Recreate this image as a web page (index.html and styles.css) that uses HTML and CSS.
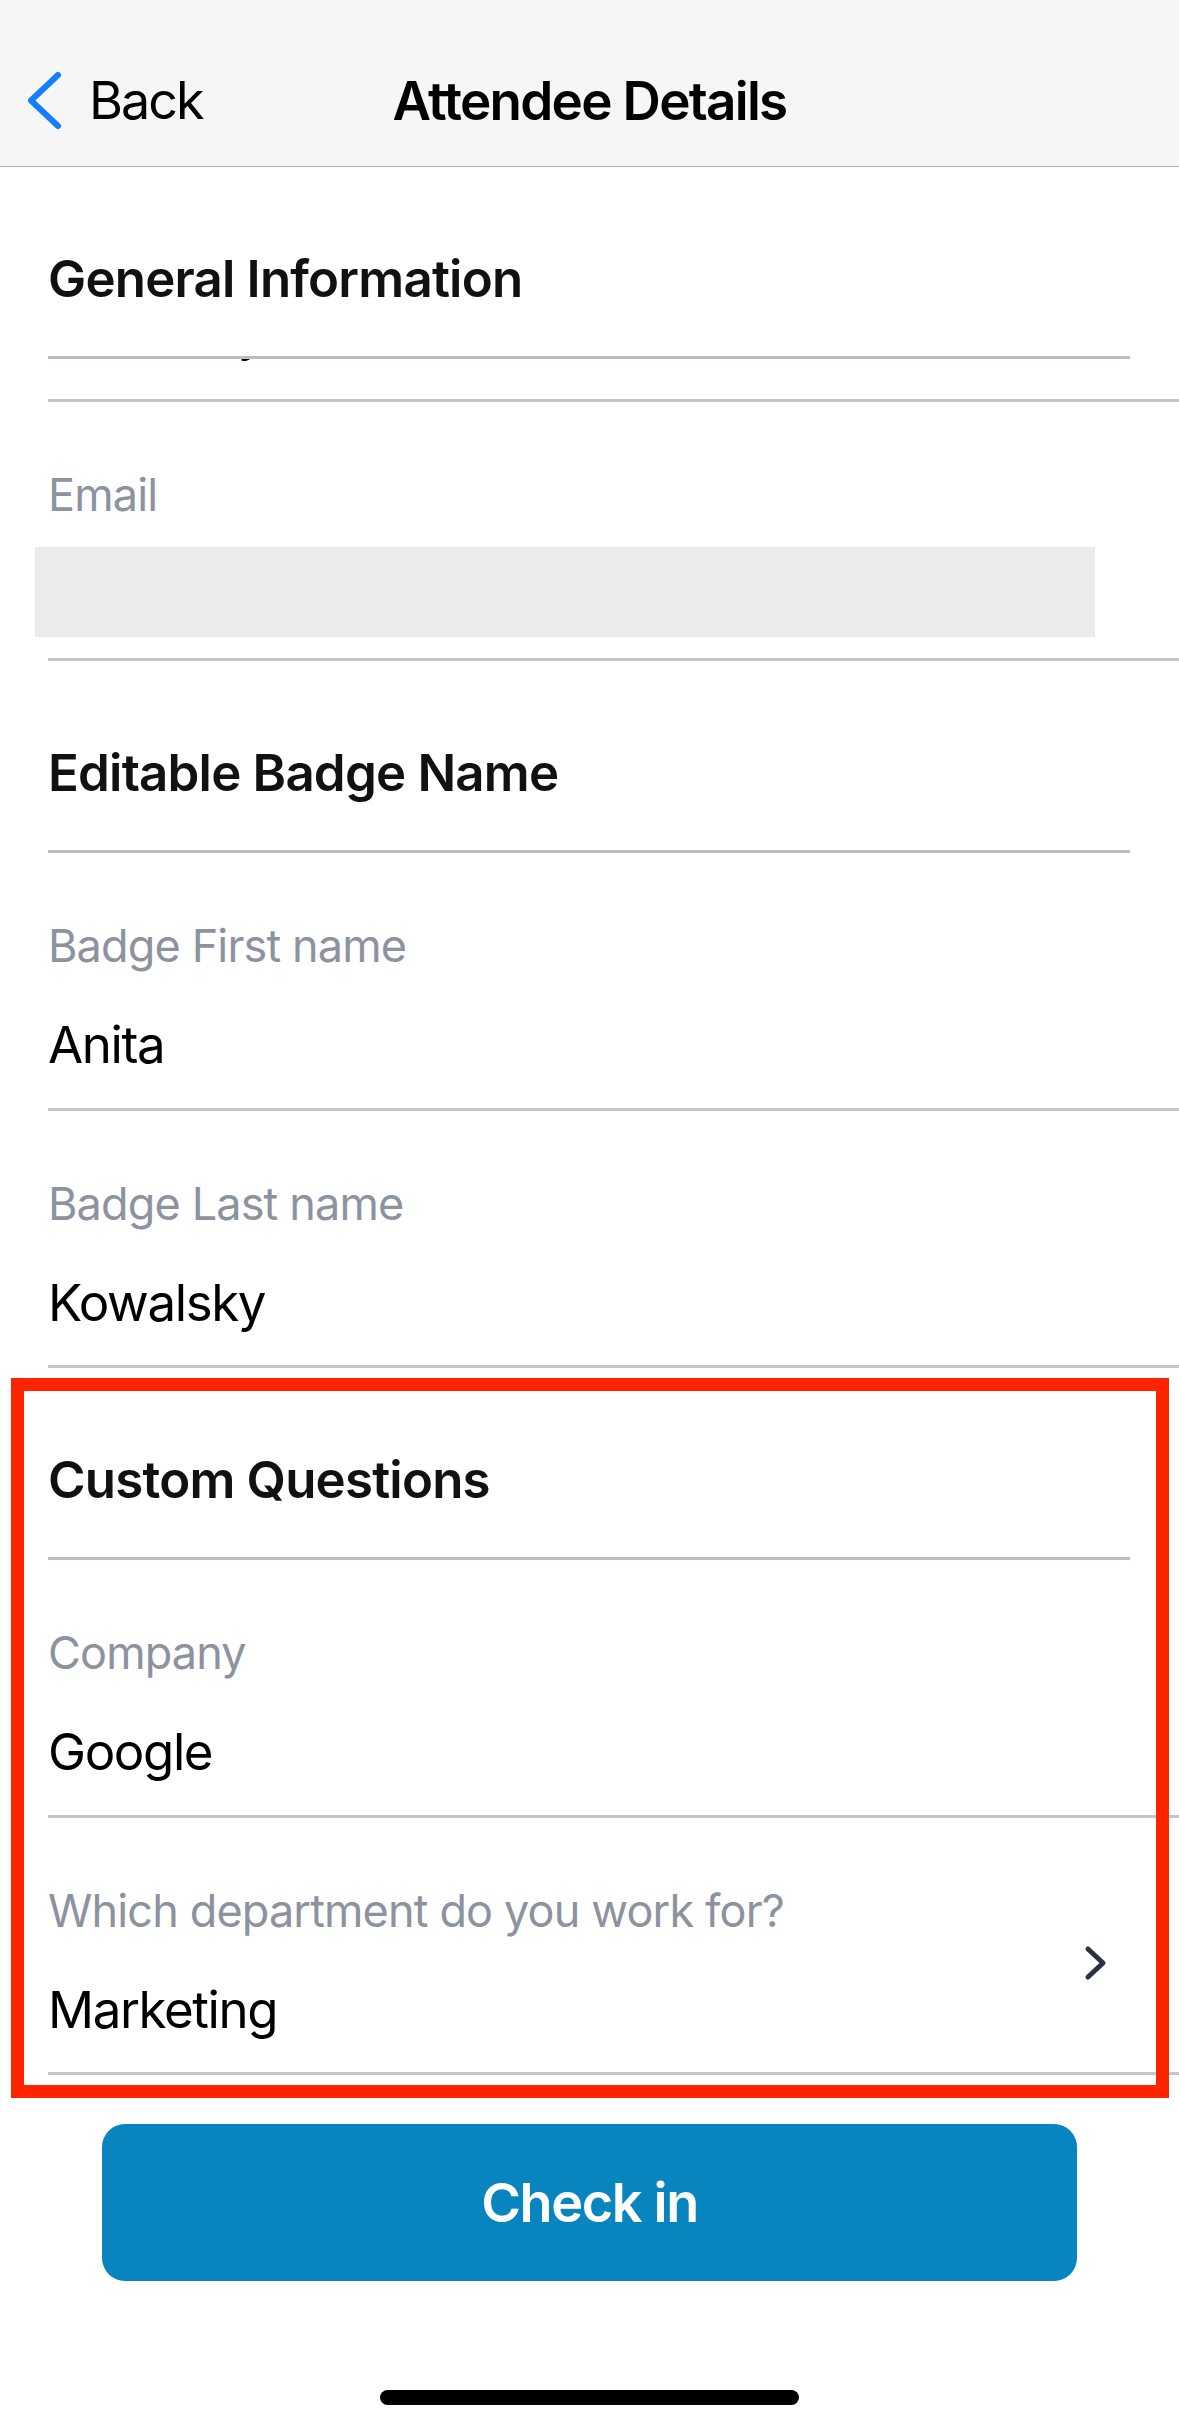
FILE: index.html
```html
<!DOCTYPE html>
<html lang="en">
<head>
<meta charset="utf-8">
<title>Attendee Details</title>
<link rel="stylesheet" href="styles.css">
</head>
<body>
<div class="screen">
  <header class="navbar">
    <a class="nav-back" href="#">
      <svg class="nav-back-icon" width="40" height="64" viewBox="0 0 40 64" aria-hidden="true">
        <path d="M33 6 L6 31.5 L33 57" fill="none" stroke="#157efb" stroke-width="6" stroke-linecap="round" stroke-linejoin="round"/>
      </svg>
      <span>Back</span>
    </a>
    <h1 class="nav-title">Attendee Details</h1>
    <span class="nav-spacer"></span>
  </header>

  <main class="form">
    <section class="group">
      <div class="group-head"><h2>General Information</h2></div>
      <div class="field field--peek"><span class="field-value">Kowalsky</span></div>
      <div class="field field--email">
        <span class="field-label">Email</span>
        <div class="field-blank"></div>
      </div>
    </section>

    <section class="group">
      <div class="group-head"><h2>Editable Badge Name</h2></div>
      <div class="field">
        <span class="field-label">Badge First name</span>
        <span class="field-value">Anita</span>
      </div>
      <div class="field">
        <span class="field-label">Badge Last name</span>
        <span class="field-value">Kowalsky</span>
      </div>
    </section>

    <section class="group group--highlight">
      <div class="group-head"><h2>Custom Questions</h2></div>
      <div class="field">
        <span class="field-label">Company</span>
        <span class="field-value">Google</span>
      </div>
      <div class="field field--select">
        <div class="field-text">
          <span class="field-label">Which department do you work for?</span>
          <span class="field-value">Marketing</span>
        </div>
        <svg class="field-chevron" width="30" height="40" viewBox="0 0 30 40" aria-hidden="true">
          <path d="M8 6 L23 20 L8 34" fill="none" stroke="#2c3140" stroke-width="5" stroke-linecap="round" stroke-linejoin="round"/>
        </svg>
      </div>
    </section>

    <div class="actions">
      <button class="btn-primary" type="button">Check in</button>
    </div>
  </main>

  <div class="home-indicator"></div>
</div>
</body>
</html>
```

FILE: styles.css
```css
* {
  box-sizing: border-box;
}

html, body {
  margin: 0;
  padding: 0;
  background: #ffffff;
}

body {
  font-family: Inter, "Noto Sans", "Liberation Sans", sans-serif;
  color: #000000;
}

.screen {
  width: 1179px;
  min-height: 2430px;
  display: flex;
  flex-direction: column;
}

/* Navigation bar */
.navbar {
  height: 167px;
  background: #f6f6f6;
  border-bottom: 1px solid #b3b3b3;
  padding-top: 69px;
  display: grid;
  grid-template-columns: 1fr auto 1fr;
  align-items: start;
}

.nav-back {
  display: flex;
  align-items: center;
  height: 64px;
  padding-left: 25px;
  gap: 24px;
  color: #000000;
  text-decoration: none;
  font-size: 52px;
  line-height: 64px;
  font-weight: 400;
  letter-spacing: -2px;
}

.nav-back-icon {
  flex: none;
  display: block;
}

.nav-title {
  margin: 0;
  font-size: 53px;
  line-height: 64px;
  font-weight: 600;
  letter-spacing: -1.7px;
  white-space: nowrap;
}

/* Form */
.form {
  display: flex;
  flex-direction: column;
}

.group {
  display: flex;
  flex-direction: column;
}

.group-head {
  margin: 0 49px 0 48px;
  padding: 82px 0 47px;
  border-bottom: 3px solid #b9bdc6;
}

.group-head h2 {
  margin: 0;
  font-size: 51px;
  line-height: 60px;
  font-weight: 600;
  letter-spacing: -0.8px;
  color: #111111;
}

.field {
  margin-left: 48px;
  padding: 66px 0 32.5px;
  border-bottom: 3px solid #c6c6c8;
  display: flex;
  flex-direction: column;
}

.field-label {
  display: block;
  font-size: 45px;
  line-height: 54px;
  color: #8d929f;
  letter-spacing: -0.85px;
  white-space: nowrap;
}

.field-value {
  display: block;
  margin-top: 42px;
  font-size: 51px;
  line-height: 60px;
  color: #000000;
  letter-spacing: -1.4px;
  white-space: nowrap;
}

.field--peek {
  height: 43px;
  padding: 0;
  overflow: hidden;
}

.field--peek .field-value {
  margin-top: -57px;
}

.field--email {
  padding-bottom: 21px;
}

.field-blank {
  margin: 25px 0 0 -13px;
  width: 1060px;
  height: 90px;
  background: #ebebeb;
}

.field--select {
  flex-direction: row;
  align-items: flex-start;
}

.field-text {
  flex: 1;
  display: flex;
  flex-direction: column;
}

.field-chevron {
  flex: none;
  display: block;
  margin: 59px 69px 0 0;
}

/* Highlight annotation */
.group--highlight {
  position: relative;
}

.group--highlight::after {
  content: "";
  position: absolute;
  top: 10px;
  left: 11px;
  right: 10px;
  bottom: -23px;
  border: 13px solid #ff2400;
  pointer-events: none;
}

/* Actions */
.actions {
  padding: 49px 0 0 102px;
}

.btn-primary {
  display: block;
  width: 975px;
  height: 157px;
  border: 0;
  border-radius: 23px;
  background: #0885bf;
  color: #ffffff;
  font-family: Inter, "Noto Sans", "Liberation Sans", sans-serif;
  font-size: 54px;
  font-weight: 600;
  letter-spacing: -1.4px;
  padding: 0;
}

.home-indicator {
  margin: 109px 0 0 380px;
  width: 419px;
  height: 15px;
  border-radius: 8px;
  background: #000000;
}
```
